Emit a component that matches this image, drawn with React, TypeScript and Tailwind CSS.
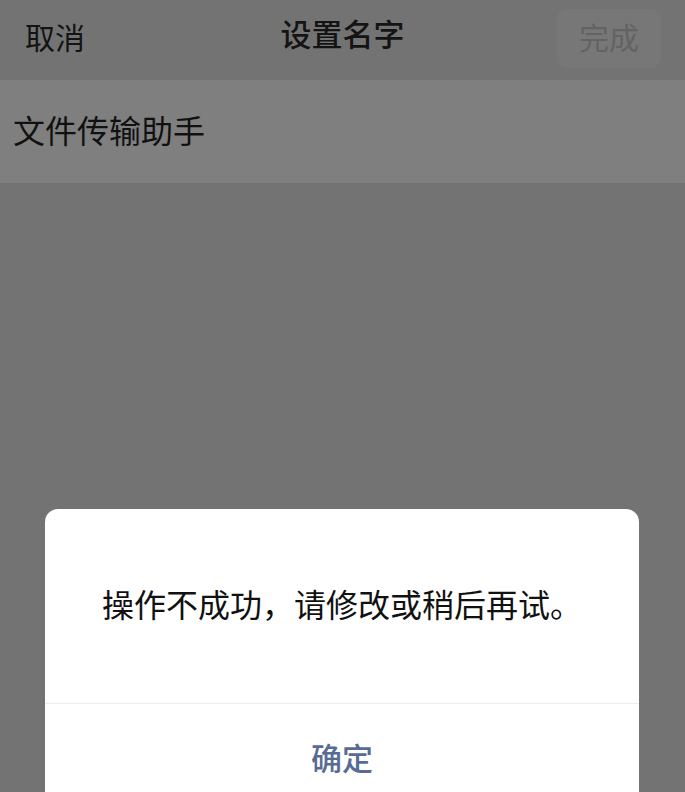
import React from "react";

export default function App() {
  return (
    <div
      className="relative w-[685px] h-[792px] overflow-hidden bg-[#737373]"
      style={{ fontFamily: '"Noto Sans CJK SC", "Noto Sans", sans-serif' }}
    >
      <div className="flex h-[80px] items-center justify-between bg-[#737373] pl-[25px] pr-[24px]">
        <span className="text-[30px] leading-none text-[#141414] -mt-[9px]">取消</span>
        <span className="absolute left-0 right-0 top-[17px] text-center text-[31px] font-medium leading-none text-[#141414] pointer-events-none">
          设置名字
        </span>
        <div className="flex h-[59px] w-[104px] items-center justify-center rounded-[10px] bg-[#777777] -mt-[3px] pb-[5px]">
          <span className="text-[30px] leading-none text-[#636363]">完成</span>
        </div>
      </div>
      <div className="flex h-[103px] items-center bg-[#7f7f7f] pl-[13px] pb-[6px]">
        <span className="text-[32px] leading-none text-[#111111]">文件传输助手</span>
      </div>

      <div className="absolute left-[45px] top-[509px] w-[594px] overflow-hidden rounded-[13px] bg-white">
        <div className="flex h-[194px] items-center justify-center pb-[7px]">
          <span className="text-[32px] leading-none text-[#111111]">
            操作不成功，请修改或稍后再试。
          </span>
        </div>
        <div className="h-px bg-[#ededed]" />
        <div className="flex h-[112px] items-center justify-center pb-[8px]">
          <span className="text-[31px] font-medium leading-none text-[#576b95]">确定</span>
        </div>
      </div>
    </div>
  );
}
